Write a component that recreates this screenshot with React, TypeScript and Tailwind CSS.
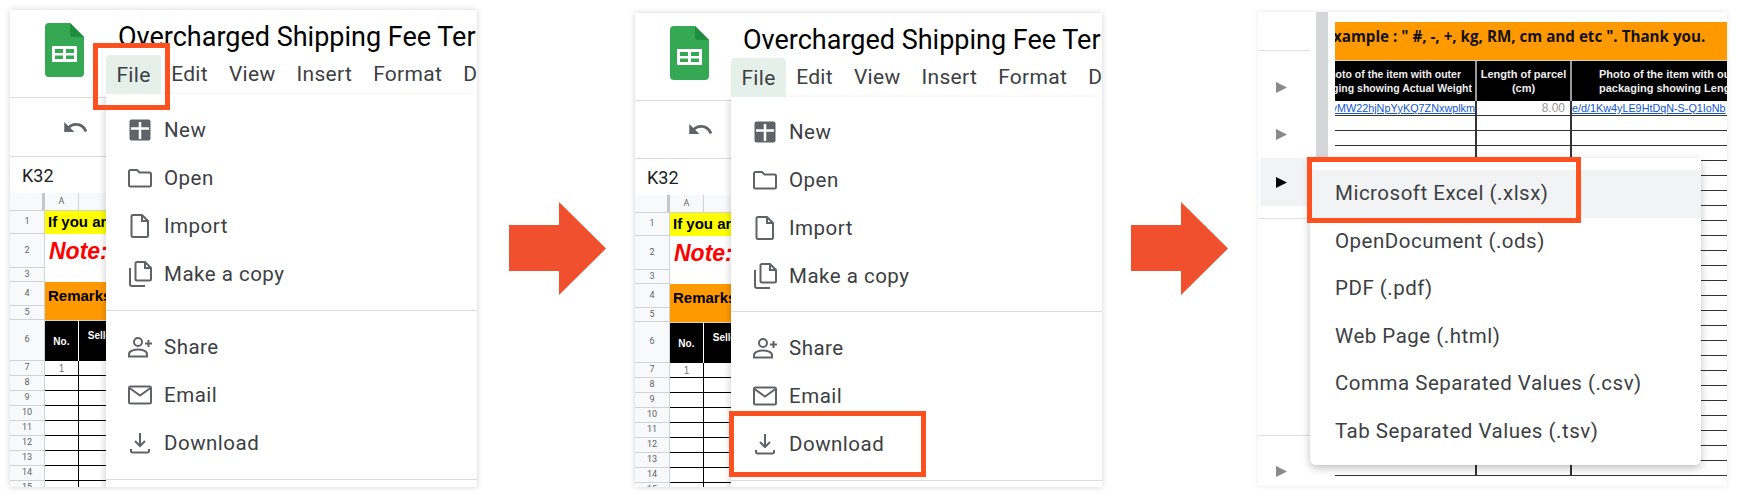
import React from "react";

const sans = "font-['Roboto','Liberation_Sans',sans-serif]";
const rowNums = [
  { n: "1", h: "h-[23px]" },
  { n: "2", h: "h-[34px]" },
  { n: "3", h: "h-[14px]" },
  { n: "4", h: "h-[24px]" },
  { n: "5", h: "h-[14px]" },
  { n: "6", h: "h-[41px]" },
  { n: "7", h: "h-[15px]" },
  { n: "8", h: "h-[15px]" },
  { n: "9", h: "h-[15px]" },
  { n: "10", h: "h-[15px]" },
  { n: "11", h: "h-[15px]" },
  { n: "12", h: "h-[15px]" },
  { n: "13", h: "h-[15px]" },
  { n: "14", h: "h-[15px]" },
  { n: "15", h: "h-[15px]" },
];

function SheetsLogo() {
  return (
    <svg width="39" height="54" viewBox="0 0 39 54">
      <path d="M4 0H25L39 14V50a4 4 0 0 1-4 4H4a4 4 0 0 1-4-4V4a4 4 0 0 1 4-4Z" fill="#34a853" />
      <path d="M25 0L39 14H28a3 3 0 0 1-3-3Z" fill="#1e8e3e" />
      <path d="M7 23H32V39H7Z" fill="#fff" />
      <path d="M10 26H18V30H10ZM21 26H29V30H21ZM10 32.5H18V36H10ZM21 32.5H29V36H21Z" fill="#34a853" />
    </svg>
  );
}

function MenuIcon({ name }: { name: string }) {
  const c = "#5f6368";
  if (name === "new")
    return (
      <svg width="22" height="22" viewBox="0 0 22 22">
        <rect x="0.5" y="0.5" width="21" height="21" rx="2" fill={c} />
        <path d="M2 9.5H20M11 3V20" stroke="#fff" strokeWidth="2.5" />
      </svg>
    );
  if (name === "open")
    return (
      <svg width="24" height="24" viewBox="0 0 24 24" fill="none" stroke={c} strokeWidth="2">
        <path d="M1 5.5a1.5 1.5 0 0 1 1.5-1.5H9l2.5 2.5H21.5A1.5 1.5 0 0 1 23 8V19a1.5 1.5 0 0 1-1.5 1.5H2.5A1.5 1.5 0 0 1 1 19Z" />
      </svg>
    );
  if (name === "import")
    return (
      <svg width="24" height="24" viewBox="0 0 24 24" fill="none" stroke={c} strokeWidth="2">
        <path d="M5 1H14L20 7V21.5a1.5 1.5 0 0 1-1.5 1.5H5A1.5 1.5 0 0 1 3.5 21.5V2.5A1.5 1.5 0 0 1 5 1ZM14 1V7H20" />
      </svg>
    );
  if (name === "copy")
    return (
      <svg width="24" height="26" viewBox="0 0 24 26" fill="none" stroke={c} strokeWidth="2">
        <path d="M9 1H17L23 7V18a1.5 1.5 0 0 1-1.5 1.5H9A1.5 1.5 0 0 1 7.5 18V2.5A1.5 1.5 0 0 1 9 1ZM17 1V7H23" />
        <path d="M2 7V23a2 2 0 0 0 2 2H17" />
      </svg>
    );
  if (name === "share")
    return (
      <svg width="26" height="22" viewBox="0 0 26 22" fill="none" stroke={c} strokeWidth="2">
        <circle cx="11" cy="6" r="4" />
        <path d="M2 20.5V18c0-3 5-4.5 9-4.5s9 1.5 9 4.5V20.5Z" />
        <path d="M21.5 4V11M18 7.5H25" />
      </svg>
    );
  if (name === "email")
    return (
      <svg width="24" height="20" viewBox="0 0 24 20" fill="none" stroke={c} strokeWidth="2">
        <rect x="1" y="1.5" width="22" height="17" rx="1.5" />
        <path d="M1.5 3L12 10.5L22.5 3" />
      </svg>
    );
  return (
    <svg width="20" height="22" viewBox="0 0 20 22" fill="none" stroke={c} strokeWidth="2">
      <path d="M10 1V14M5 9L10 14L15 9" />
      <path d="M1 17V19.5a1.5 1.5 0 0 0 1.5 1H17.5a1.5 1.5 0 0 0 1.5-1V17" />
    </svg>
  );
}

function MenuItem({ icon, label }: { icon: string; label: string }) {
  return (
    <div className="flex h-[48px] items-center pl-[21px]">
      <div className="flex w-[26px] justify-center">
        <MenuIcon name={icon} />
      </div>
      <span className="ml-[11px] text-[20.5px] tracking-[0.5px] text-[#3c4043]">{label}</span>
    </div>
  );
}

function OrangeBox({ className }: { className: string }) {
  return <div className={`absolute z-20 border-[5px] border-[#ff5020] ${className}`} />;
}

function SheetPanel({ children, fileBox, compact }: { children?: React.ReactNode; fileBox?: boolean; compact?: boolean }) {
  return (
    <div className={`relative ${compact ? "h-[474px]" : "h-[477px]"} w-[467px] shrink-0 overflow-hidden bg-white shadow-[0_0_6px_rgba(0,0,0,0.18)] ${sans}`}>
      <div className="h-[88px] border-b border-[#dadce0]">
        <div className="flex h-[88px]">
          <div className="ml-[35px] mt-[13px]">
            <SheetsLogo />
          </div>
          <div className="ml-[34px]">
            <div className="mt-[9px] whitespace-nowrap text-[27px] leading-[36px] text-black">Overcharged Shipping Fee Terms</div>
            <div className="mt-[3px] flex gap-[21px] whitespace-nowrap text-[21px] leading-[32px] tracking-[0.3px] text-[#3c4043]">
              <span className="-mr-[2px]">File</span>
              <span>Edit</span>
              <span>View</span>
              <span>Insert</span>
              <span>Format</span>
              <span>Data</span>
            </div>
          </div>
        </div>
      </div>
      <div className={`flex ${compact ? "h-[58px]" : "h-[59px]"} items-center border-b border-[#dadce0] pl-[52px]`}>
        <svg width="27" height="27" viewBox="0 0 24 24" fill="#5f6368">
          <path d="M12.5 8c-2.65 0-5.05.99-6.9 2.6L2 7v9h9l-3.62-3.62c1.39-1.16 3.16-1.88 5.12-1.88 3.54 0 6.55 2.31 7.6 5.5l2.37-.78C21.08 11.03 17.15 8 12.5 8z" />
        </svg>
      </div>
      <div className="flex h-[36px] items-center pl-[12px] text-[18px] text-[#202124]">K32</div>
      <div className="flex h-[18px] border-b border-[#d0d2d5] bg-[#f8f9fa]">
        <div className="w-[35px] border-r-[3px] border-[#c4c6c9]" />
        <div className="flex w-[34px] items-center justify-center border-r border-[#d0d2d5] text-[9px] text-[#5f6368]">A</div>
      </div>
      <div className="flex">
        <div className="w-[35px] shrink-0 bg-[#f8f9fa]">
          {rowNums.map((r) => (
            <div key={r.n} className={`${r.h} flex items-center justify-center border-b border-r border-[#d0d2d5] text-[9px] text-[#5f6368]`}>
              {r.n}
            </div>
          ))}
        </div>
        <div className="w-[70px] shrink-0 font-['Liberation_Sans',sans-serif]">
          <div className="flex h-[23px] items-center bg-[#ffff00] pl-[3px] text-[15px] font-bold whitespace-nowrap text-black">If you are</div>
          <div className="flex h-[34px] items-center pl-[4px] text-[23px] font-bold italic whitespace-nowrap text-[#ff0000]">Note:</div>
          <div className="h-[14px]" />
          <div className="flex h-[38px] items-start bg-[#ff9900] pl-[3px] pt-[3px] text-[15px] font-bold whitespace-nowrap text-black">Remarks</div>
          <div className="flex h-[41px] border-t border-[#d0d2d5] bg-black text-white">
            <div className="flex w-[34px] items-center justify-center border-r border-white text-[10px] font-bold">No.</div>
            <div className="pl-[9px] pt-[7px] text-[10px] font-bold">Seller</div>
          </div>
          {Array.from({ length: 9 }).map((_, i) => (
            <div key={i} className="flex h-[15px] border-b border-black">
              <div className="flex w-[34px] items-center justify-center border-r border-black text-[10px] text-[#777]">{i === 0 ? "1" : ""}</div>
            </div>
          ))}
        </div>
      </div>
      <div className="absolute left-[96px] top-[84px] z-10 h-[400px] w-[371px] bg-white shadow-[-2px_2px_6px_rgba(0,0,0,0.15)]">
        <div className={compact ? "h-[11px]" : "h-[12px]"} />
        <MenuItem icon="new" label="New" />
        <MenuItem icon="open" label="Open" />
        <MenuItem icon="import" label="Import" />
        <MenuItem icon="copy" label="Make a copy" />
        <div className={`mb-[12px] ${compact ? "mt-[11px]" : "mt-[12px]"} h-px bg-[#dadce0]`} />
        <MenuItem icon="share" label="Share" />
        <MenuItem icon="email" label="Email" />
        <MenuItem icon="download" label="Download" />
        <div className="mt-[12px] h-px bg-[#dadce0]" />
      </div>
      <div className="absolute left-[96px] top-[45px] z-10 flex h-[39px] w-[55px] items-center justify-center rounded-t-[4px] bg-[#e6f0ea] pt-[2px] text-[21px] tracking-[0.3px] text-[#3c4043]">
        File
      </div>
      {fileBox && <OrangeBox className="left-[83px] top-[33px] h-[67px] w-[77px]" />}
      {children}
    </div>
  );
}

function Arrow() {
  return (
    <svg width="97" height="93" viewBox="0 0 97 93" className="shrink-0">
      <path d="M0 23H50V0L97 46.5L50 93V69H0Z" fill="#f0502d" />
    </svg>
  );
}

function ExportPanel() {
  const tri = [
    { t: "top-[70px]", c: "#8a8a8a" },
    { t: "top-[117px]", c: "#8a8a8a" },
    { t: "top-[165px]", c: "#000" },
    { t: "top-[454px]", c: "#8a8a8a" },
  ];
  return (
    <div className={`relative h-[474px] w-[469px] shrink-0 overflow-hidden bg-white shadow-[0_0_5px_rgba(0,0,0,0.1)] ${sans}`}>
      <div className="absolute left-[2px] top-[146px] h-[48px] w-[52px] bg-[#f1f3f4]" />
      <div className="absolute left-0 top-[38px] h-px w-[52px] bg-[#e0e0e0]" />
      <div className="absolute left-0 top-[206px] h-px w-[52px] bg-[#e0e0e0]" />
      <div className="absolute left-0 top-[423px] h-px w-[52px] bg-[#e0e0e0]" />
      {tri.map((x) => (
        <svg key={x.t} width="11" height="11" viewBox="0 0 11 11" className={`absolute left-[18px] ${x.t}`}>
          <path d="M0 0L11 5.5L0 11Z" fill={x.c} />
        </svg>
      ))}
      <div className="absolute left-[58px] top-0 h-[150px] w-[12px] bg-[#d5d6da]" />
      <div className="ml-[77px] pt-[10px] font-['Liberation_Sans',sans-serif]">
        <div className="flex h-[38px] items-start overflow-hidden whitespace-nowrap bg-[#ff9900] pt-[3px] text-[15.2px] font-bold text-[#111]">
          <span className="-ml-[11px] font-['Open_Sans','Liberation_Sans',sans-serif]">example : " #, -, +, kg, RM, cm and etc ". Thank you.</span>
        </div>
        <div className="flex h-[41px] border-t border-[#d0d2d5] bg-black text-[11px] font-bold leading-[14px] text-[#eee]">
          <div className="flex w-[140px] flex-col items-end overflow-hidden whitespace-nowrap pt-[6px] text-[10.5px]">
            <div className="pr-[14px]">hoto of the item with outer</div>
            <div className="pr-[3px]">aging showing Actual Weight</div>
          </div>
          <div className="w-[97px] whitespace-nowrap border-x-2 border-[#999] pt-[6px] text-center">
            Length of parcel
            <br />
            (cm)
          </div>
          <div className="flex-1 overflow-hidden whitespace-nowrap pl-[27px] pt-[6px]">
            Photo of the item with outer
            <br />
            packaging showing Length
          </div>
        </div>
        <div className="flex h-[15px] border-b border-[#333] text-[10.8px] leading-[14px]">
          <div className="flex w-[140px] justify-end overflow-hidden whitespace-nowrap text-[#1155cc] underline">vMW22hjNpYyKQ7ZNxwplkm</div>
          <div className="w-[97px] border-x-2 border-[#333] pr-[5px] text-right text-[12px] text-[#999]">8.00</div>
          <div className="flex-1 overflow-hidden whitespace-nowrap text-[#1155cc] underline">e/d/1Kw4yLE9HtDqN-S-Q1IoNb</div>
        </div>
        {Array.from({ length: 24 }).map((_, i) => (
          <div key={i} className="flex h-[15px] border-b border-[#333]">
            <div className="w-[140px]" />
            <div className="w-[97px] border-x-2 border-[#333]" />
          </div>
        ))}
      </div>
      <div className="absolute left-[52px] top-[146px] z-10 h-[307px] w-[391px] rounded-b-[6px] bg-white pt-[12px] shadow-[0_3px_8px_rgba(0,0,0,0.25)]">
        {[
          "Microsoft Excel (.xlsx)",
          "OpenDocument (.ods)",
          "PDF (.pdf)",
          "Web Page (.html)",
          "Comma Separated Values (.csv)",
          "Tab Separated Values (.tsv)",
        ].map((t, i) => (
          <div key={t} className={`flex h-[47.5px] items-center pl-[25px] text-[20.5px] tracking-[0.5px] text-[#3c4043] ${i === 0 ? "bg-[#f1f3f4]" : ""}`}>
            {t}
          </div>
        ))}
      </div>
      <OrangeBox className="left-[49px] top-[145px] h-[66px] w-[274px]" />
    </div>
  );
}

export default function App() {
  return (
    <div className="flex h-[498px] w-[1737px] items-start bg-white pl-[10px] pt-[10px]">
      <SheetPanel fileBox />
      <div className="ml-[32px] mr-[29px] mt-[192px]">
        <Arrow />
      </div>
      <div className="mt-[3px]">
        <SheetPanel compact>
          <OrangeBox className="left-[94px] top-[398px] h-[66px] w-[197px]" />
        </SheetPanel>
      </div>
      <div className="ml-[29px] mr-[30px] mt-[192px]">
        <Arrow />
      </div>
      <div className="mt-[2px]">
        <ExportPanel />
      </div>
    </div>
  );
}
